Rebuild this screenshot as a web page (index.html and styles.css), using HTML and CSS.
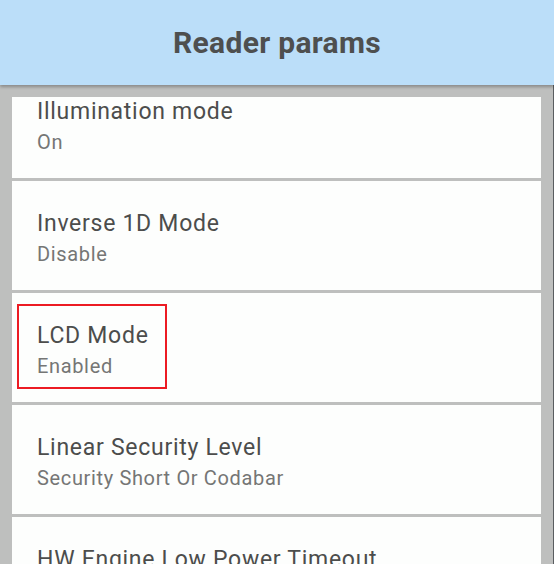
FILE: index.html
```html
<!DOCTYPE html>
<html>
<head>
<meta charset="utf-8">
<link rel="stylesheet" href="styles.css">
</head>
<body>
<div class="app">
  <header class="header">Reader params</header>
  <div class="viewport">
    <div class="clip">
      <ul class="list">
        <li class="card"><div class="title">Illumination mode</div><div class="sub">On</div></li>
        <li class="card"><div class="title">Inverse 1D Mode</div><div class="sub">Disable</div></li>
        <li class="card"><div class="title">LCD Mode</div><div class="sub">Enabled</div><span class="mark"></span></li>
        <li class="card"><div class="title">Linear Security Level</div><div class="sub">Security Short Or Codabar</div></li>
        <li class="card"><div class="title">HW Engine Low Power Timeout</div></li>
      </ul>
    </div>
  </div>
</div>
</body>
</html>
```

FILE: styles.css
```css
html, body {
  margin: 0;
  padding: 0;
}
body {
  width: 554px;
  height: 564px;
  overflow: hidden;
  background: #bebfbe;
  font-family: Roboto, "Noto Sans", "Liberation Sans", sans-serif;
}
.app {
  display: flex;
  flex-direction: column;
  height: 564px;
}
.header {
  position: relative;
  z-index: 2;
  flex: 0 0 85px;
  display: flex;
  align-items: center;
  justify-content: center;
  background: #bbdef9;
  color: #4e4f4f;
  font-weight: 700;
  font-size: 30px;
  letter-spacing: 0.3px;
  box-shadow: 0 2px 3px rgba(0, 0, 0, 0.28);
}
.viewport {
  flex: 1;
  min-height: 0;
  padding: 12px 12px 0 12px;
  border-right: 1px solid #5a5d60;
  display: flex;
  flex-direction: column;
}
.clip {
  flex: 1;
  overflow: hidden;
}
.list {
  list-style: none;
  margin: -28px 0 0 0;
  padding: 0;
  display: flex;
  flex-direction: column;
  gap: 3px;
}
.card {
  position: relative;
  height: 109px;
  box-sizing: border-box;
  padding: 27.5px 0 0 25px;
  background: #fdfefd;
  flex: 0 0 auto;
}
.title {
  font-size: 23px;
  letter-spacing: 0.72px;
  line-height: 30px;
  color: #4c4d4c;
  white-space: nowrap;
}
.sub {
  font-size: 20px;
  letter-spacing: 0.65px;
  line-height: 30px;
  color: #757675;
  white-space: nowrap;
}
.mark {
  position: absolute;
  left: 5px;
  top: 11px;
  width: 150px;
  height: 85px;
  box-sizing: border-box;
  border: 2px solid #ec1b23;
}
```
